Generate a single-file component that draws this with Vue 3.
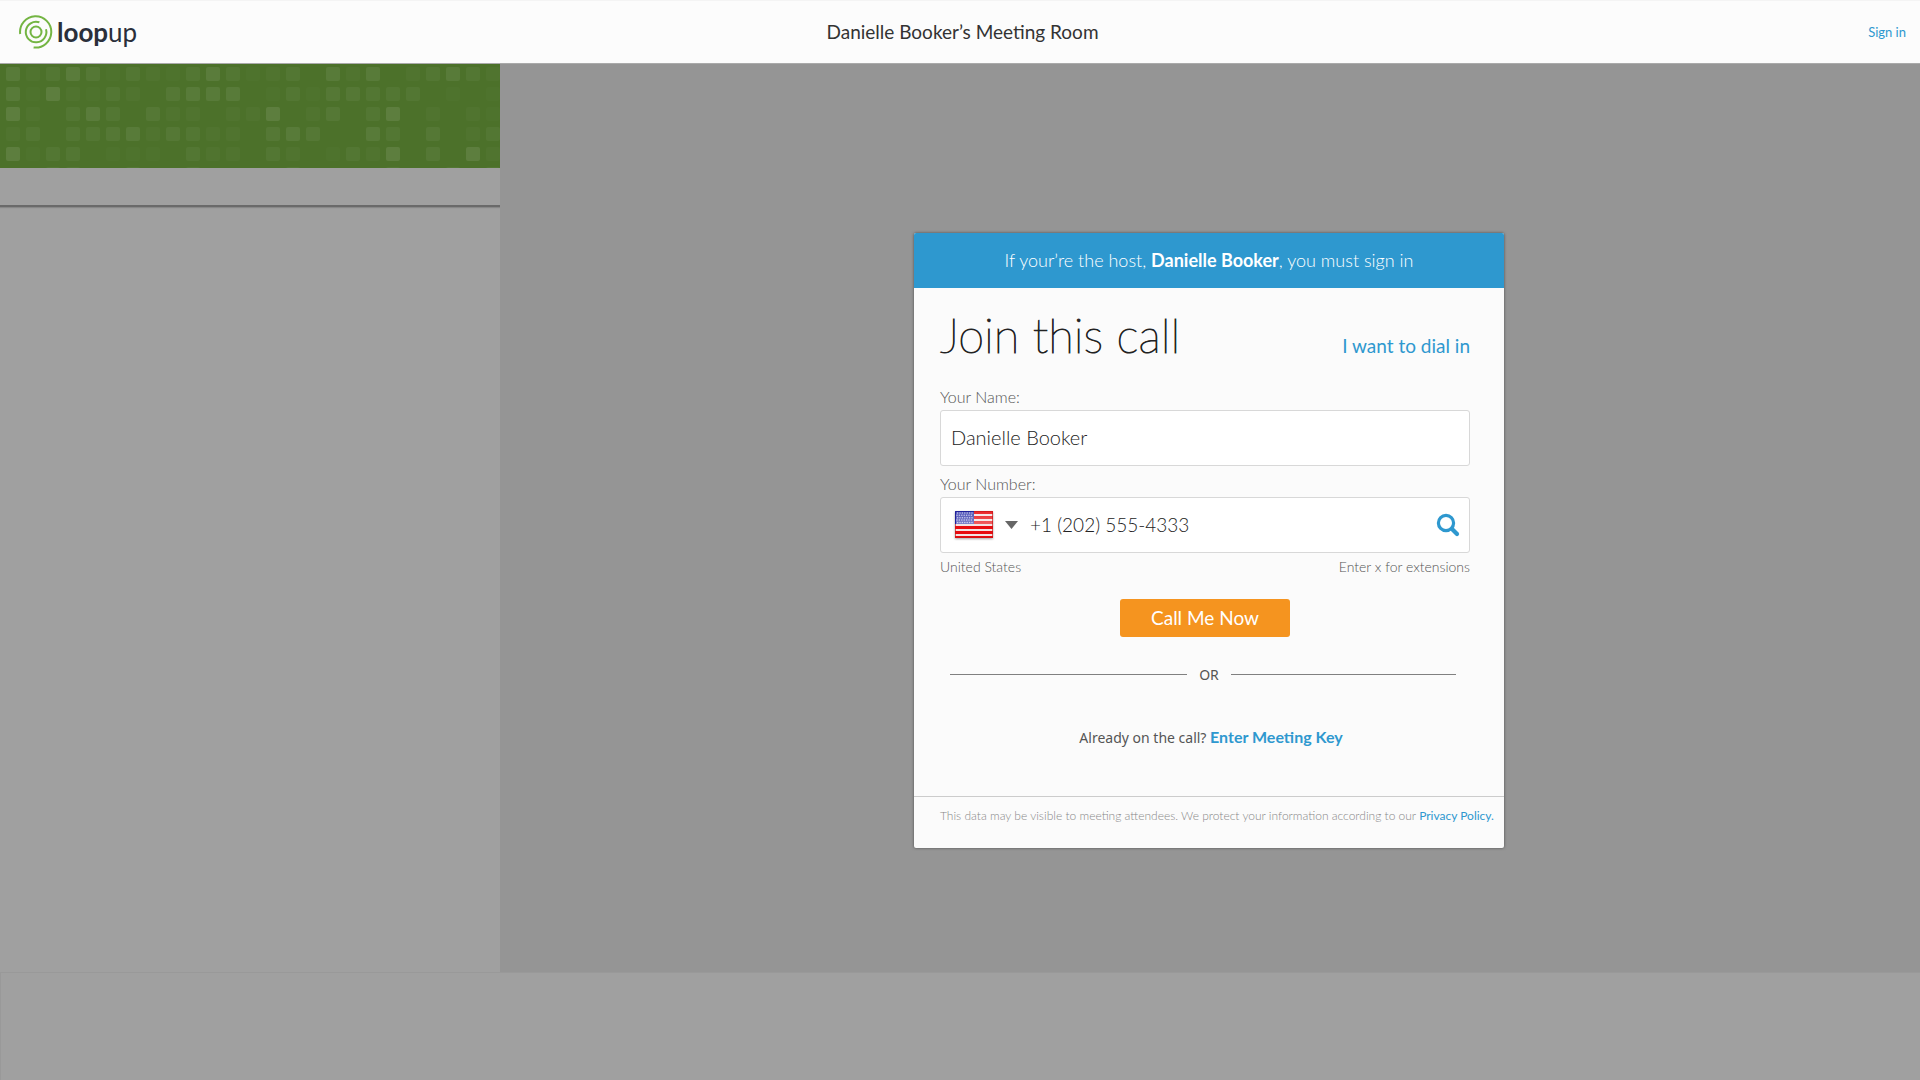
<script setup>
import { ref } from 'vue'

const name = ref('Danielle Booker')
const phone = ref('+1 (202) 555-4333')
const country = ref('us')

// Brightness level (0 = hidden) of each tile in the sidebar banner
const rows = [
  '5236413213631230525023532',
  '5172132045550131443330101',
  '7203630422022702403702021',
  '2303345243220454005304023',
  '7133011103220320132704072',
  '0033003003000030000300303'
]
const tiles = rows.flatMap((row, y) =>
  [...row].map((level, x) => ({ x: x * 20 + 6, y: y * 20 + 3, o: Number(level) * 0.014 }))
).filter((tile) => tile.o > 0)
</script>

<template>
  <div class="page">
    <header class="topbar">
      <a class="logo" href="#" aria-label="loopup">
        <svg class="mark" viewBox="0 0 34 34" width="34" height="34" fill="none" stroke="#74b543" stroke-width="2" aria-hidden="true">
          <circle cx="17" cy="17" r="5.5" />
          <path d="M20.4 7.3A10.3 10.3 0 1 0 27 14.3" />
          <path d="M1.2 19A15.6 15.6 0 1 1 14.6 32.4" />
        </svg>
        <span class="word"><b>loop</b>up</span>
      </a>
      <h1 class="room">Danielle Booker’s Meeting Room</h1>
      <a class="signin" href="#">Sign in</a>
    </header>

    <div class="body">
      <aside class="sidebar">
        <svg class="banner" height="104" aria-hidden="true">
          <rect v-for="t in tiles" :key="`${t.x}-${t.y}`" :x="t.x" :y="t.y" width="14" height="14" rx="2" fill="#fff" :fill-opacity="t.o" />
        </svg>
        <div class="tools"></div>
      </aside>

      <main class="stage">
        <form class="card" @submit.prevent>
          <p class="notice">If your’re the host, <b>Danielle Booker</b>, you must sign in</p>
          <div class="content">
            <div class="heading">
              <h2>Join this call</h2>
              <a href="#">I want to dial in</a>
            </div>

            <label class="label" for="name">Your Name:</label>
            <input id="name" v-model="name" class="box name" type="text" />

            <label class="label" for="phone">Your Number:</label>
            <div class="box phone">
              <div class="country">
                <svg class="flag" viewBox="0 0 38 27" width="38" height="27" aria-hidden="true">
                  <defs>
                    <linearGradient id="gloss" x1="0" y1="0" x2="0" y2="1">
                      <stop offset="0" stop-color="#fff" stop-opacity=".1" />
                      <stop offset=".5" stop-color="#fff" stop-opacity=".35" />
                      <stop offset=".5" stop-color="#fff" stop-opacity="0" />
                    </linearGradient>
                  </defs>
                  <rect width="38" height="27" fill="#f3e4e4" />
                  <rect v-for="n in 6" :key="n" x="0" :y="(n - 1) * 5" width="38" height="3" fill="#e80c0f" />
                  <rect width="19" height="13" fill="#3a3fae" />
                  <g fill="#b9bce8">
                    <template v-for="r in 5" :key="r">
                      <circle v-for="c in 7" :key="c" :cx="c * 2.4 - 0.4 + (r % 2) * 0.6" :cy="r * 2.4 - 0.5" r=".75" />
                    </template>
                  </g>
                  <rect width="38" height="27" fill="url(#gloss)" />
                  <path d="M.5 13V.5H19" fill="none" stroke="#20209a" />
                  <path d="M19 .5H37.5V26.5H.5V13" fill="none" stroke="#c91518" stroke-opacity=".7" />
                </svg>
                <svg class="caret" viewBox="0 0 13 8" width="13" height="8" aria-hidden="true"><path d="M0 0H13L6.5 8Z" fill="#666" /></svg>
                <select v-model="country" aria-label="Country"><option value="us">United States</option></select>
              </div>
              <input id="phone" v-model="phone" type="tel" />
              <button class="search" type="button" aria-label="Search">
                <svg viewBox="0 0 24 24" width="24" height="24" fill="none" stroke="#2e98cf" aria-hidden="true">
                  <circle cx="10" cy="10" r="7.6" stroke-width="3.2" />
                  <path d="M16 16L21 21" stroke-width="4.2" stroke-linecap="round" />
                </svg>
              </button>
            </div>
            <div class="hints"><span>United States</span><span>Enter x for extensions</span></div>

            <button class="call" type="submit">Call Me Now</button>

            <div class="or"><span>OR</span></div>

            <p class="already">Already on the call? <a href="#">Enter Meeting Key</a></p>
          </div>
          <p class="privacy">This data may be visible to meeting attendees. We protect your information according to our <a href="#">Privacy Policy.</a></p>
        </form>
      </main>
    </div>

    <footer class="bottom"></footer>
  </div>
</template>

<style>
body {
  margin: 0;
}
</style>

<style scoped>
* {
  box-sizing: border-box;
}
.page {
  display: flex;
  flex-direction: column;
  min-height: 100vh;
  background: #a0a0a0;
  font-family: Lato, sans-serif;
  color: #333;
}
h1,
h2,
p {
  margin: 0;
  font-weight: 400;
}
a {
  color: #2e98cf;
  text-decoration: none;
}
.topbar {
  display: grid;
  grid-template-columns: 1fr auto 1fr;
  align-items: center;
  height: 64px;
  padding: 0 14px 0 19px;
  background: #fcfcfc;
  border-top: 1px solid #f4f4f4;
  border-bottom: 1px solid #aaa;
}
.logo {
  display: flex;
  align-items: center;
  gap: 4px;
  color: #2a2f3a;
}
.word {
  font: 400 26px/30px Lato, sans-serif;
}
.word b {
  font-weight: 700;
}
.room {
  font-size: 19px;
  line-height: 24px;
}
.signin {
  justify-self: end;
  font-size: 13px;
  line-height: 20px;
}
.body {
  display: flex;
  flex: 1;
}
.sidebar {
  width: 500px;
  flex: none;
}
.banner {
  display: block;
  width: 100%;
  background: #4c712a;
}
.tools {
  height: 39px;
  border-bottom: 2px solid #6a6a6a;
  box-shadow: 0 1px 1px #888;
}
.stage {
  flex: 1;
  display: flex;
  flex-direction: column;
  align-items: center;
  justify-content: center;
  padding: 44px 2px 0 0;
  background: #959595;
}
.bottom {
  height: 108px;
  border-top: 1px solid #999;
  border-left: 1px solid #999;
}
.card {
  width: 590px;
  background: #fbfbfb;
  border-radius: 2px;
  box-shadow: 0 0 3px rgba(0, 0, 0, 0.5);
  overflow: hidden;
}
.notice {
  height: 55px;
  background: #2e98cf;
  color: #fff;
  font-size: 18px;
  line-height: 55px;
  text-align: center;
  font-weight: 300;
}
.notice b {
  font-weight: 700;
}
.content {
  display: flex;
  flex-direction: column;
  padding: 19px 34px 0 26px;
  height: 508px;
}
.heading {
  display: flex;
  justify-content: space-between;
  align-items: baseline;
  height: 80px;
}
.heading h2 {
  font-size: 47px;
  line-height: 56px;
  font-weight: 200;
  color: #222;
  -webkit-text-stroke: 1px #222;
}
.heading a {
  font-size: 19px;
}
.label {
  height: 23px;
  font-size: 16px;
  line-height: 20px;
  font-weight: 300;
  color: #555;
}
.box {
  width: 100%;
  height: 56px;
  background: #fff;
  border: 1px solid #d8d8d8;
  border-radius: 3px;
}
input {
  font: 300 19px/24px Lato, sans-serif;
  color: #222;
}
.name {
  padding: 0 10px 2px;
  margin-bottom: 8px;
  font-size: 20px;
}
.phone {
  display: flex;
  align-items: center;
  padding: 0 9px 0 14px;
}
.country {
  position: relative;
  display: flex;
  align-items: center;
  gap: 12px;
  width: 75px;
}
.flag {
  filter: drop-shadow(0 1px 1px rgba(0, 0, 0, 0.35));
}
.country select {
  position: absolute;
  inset: 0;
  opacity: 0;
}
.phone input {
  flex: 1;
  min-width: 0;
  padding: 0;
  border: 0;
  background: none;
}
.search {
  display: flex;
  padding: 0;
  border: 0;
  background: none;
}
.hints {
  display: flex;
  justify-content: space-between;
  margin-top: 4px;
  font-size: 14px;
  line-height: 20px;
  font-weight: 300;
  color: #555;
}
.call {
  align-self: center;
  width: 170px;
  height: 38px;
  margin-top: 22px;
  padding: 0;
  border: 0;
  border-radius: 3px;
  background: #f5941f;
  color: #fff;
  font: 400 19px/24px Lato, sans-serif;
}
.or {
  display: flex;
  align-items: center;
  gap: 12px;
  margin: 28px 14px 0 10px;
  color: #555;
  font: 400 14px/20px "Noto Sans", sans-serif;
}
.or::before,
.or::after {
  content: "";
  flex: 237;
  height: 1px;
  background: #808080;
}
.or::after {
  flex: 225;
}
.already {
  margin: 42px 0 0 12px;
  text-align: center;
  color: #555;
  font: 400 14px/20px "Noto Sans", sans-serif;
}
.already a {
  font: 700 16px/20px Lato, sans-serif;
}
.privacy {
  height: 52px;
  padding: 10px 0 0 26px;
  border-top: 1px solid #ccc;
  font-size: 12px;
  line-height: 18px;
  font-weight: 300;
  color: #888;
  white-space: nowrap;
}
.privacy a {
  font-weight: 400;
}
</style>
